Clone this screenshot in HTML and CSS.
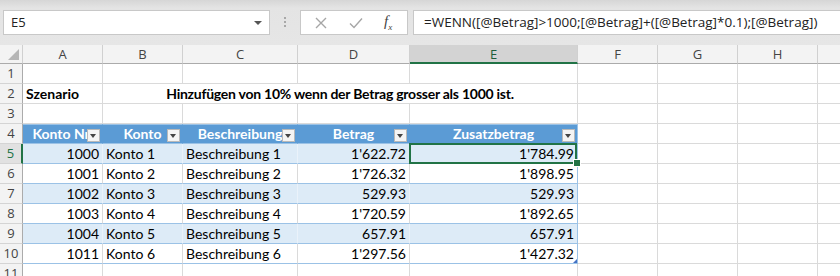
FILE: index.html
```html
<!doctype html>
<html>
    <head>
        <meta charset="UTF-8">
        <title>Zusatzbetrag</title>
        <link rel="stylesheet" href="styles.css">
    </head>
    <body>
        <div class="bar">
            <div class="namebox">E5<i class="caret"></i></div>
            <div class="grip"><b></b><b></b><b></b></div>
            <div class="fbtns">
                <svg class="ico" width="14" height="14" viewBox="0 0 14 14"><path d="M2 2 L12 12 M12 2 L2 12" stroke="#a6a6a6" stroke-width="1.4" fill="none"/></svg>
                <svg class="ico" width="16" height="14" viewBox="0 0 16 14"><path d="M2 7.5 L6 11.5 L14 2.5" stroke="#a6a6a6" stroke-width="1.4" fill="none"/></svg>
                <span class="fx"><i>f</i><sub>x</sub></span>
            </div>
            <div class="formula">=WENN([@Betrag]&gt;1000;[@Betrag]+([@Betrag]*0.1);[@Betrag])</div>
        </div>

        <div class="sheet">
            <!-- Spaltenköpfe -->
            <div class="ch corner"></div>
            <div class="ch">A</div>
            <div class="ch">B</div>
            <div class="ch">C</div>
            <div class="ch">D</div>
            <div class="ch sel">E</div>
            <div class="ch">F</div>
            <div class="ch">G</div>
            <div class="ch">H</div>
            <div class="ch"></div>

            <div class="rh">1</div>
            <div class="c"></div><div class="c"></div><div class="c"></div><div class="c"></div><div class="c"></div><div class="c"></div><div class="c"></div><div class="c"></div><div class="c"></div>

            <div class="rh">2</div>
            <div class="c bold">Szenario</div>
            <div class="c bold merged">Hinzufügen von 10% wenn der Betrag grosser als 1000 ist.</div>
            <div class="c"></div><div class="c"></div><div class="c"></div><div class="c"></div>

            <div class="rh">3</div>
            <div class="c"></div><div class="c"></div><div class="c"></div><div class="c"></div><div class="c"></div><div class="c"></div><div class="c"></div><div class="c"></div><div class="c"></div>

            <!-- Tabellenkopf -->
            <div class="rh">4</div>
            <div class="c th">Konto Nr.<span class="dd"></span></div>
            <div class="c th">Konto<span class="dd"></span></div>
            <div class="c th">Beschreibung<span class="dd"></span></div>
            <div class="c th">Betrag<span class="dd"></span></div>
            <div class="c th last">Zusatzbetrag<span class="dd"></span></div>
            <div class="c"></div><div class="c"></div><div class="c"></div><div class="c"></div>

            <div class="rh sel">5</div>
            <div class="c td band num">1000</div>
            <div class="c td band">Konto 1</div>
            <div class="c td band">Beschreibung 1</div>
            <div class="c td band num">1'622.72</div>
            <div class="c td band num last active">1'784.99</div>
            <div class="c"></div><div class="c"></div><div class="c"></div><div class="c"></div>

            <div class="rh">6</div>
            <div class="c td num">1001</div>
            <div class="c td">Konto 2</div>
            <div class="c td">Beschreibung 2</div>
            <div class="c td num">1'726.32</div>
            <div class="c td num last">1'898.95</div>
            <div class="c"></div><div class="c"></div><div class="c"></div><div class="c"></div>

            <div class="rh">7</div>
            <div class="c td band num">1002</div>
            <div class="c td band">Konto 3</div>
            <div class="c td band">Beschreibung 3</div>
            <div class="c td band num">529.93</div>
            <div class="c td band num last">529.93</div>
            <div class="c"></div><div class="c"></div><div class="c"></div><div class="c"></div>

            <div class="rh">8</div>
            <div class="c td num">1003</div>
            <div class="c td">Konto 4</div>
            <div class="c td">Beschreibung 4</div>
            <div class="c td num">1'720.59</div>
            <div class="c td num last">1'892.65</div>
            <div class="c"></div><div class="c"></div><div class="c"></div><div class="c"></div>

            <div class="rh">9</div>
            <div class="c td band num">1004</div>
            <div class="c td band">Konto 5</div>
            <div class="c td band">Beschreibung 5</div>
            <div class="c td band num">657.91</div>
            <div class="c td band num last">657.91</div>
            <div class="c"></div><div class="c"></div><div class="c"></div><div class="c"></div>

            <div class="rh">10</div>
            <div class="c td num">1011</div>
            <div class="c td">Konto 6</div>
            <div class="c td">Beschreibung 6</div>
            <div class="c td num">1'297.56</div>
            <div class="c td num last end">1'427.32</div>
            <div class="c"></div><div class="c"></div><div class="c"></div><div class="c"></div>

            <div class="rh">11</div>
            <div class="c"></div><div class="c"></div><div class="c"></div><div class="c"></div><div class="c"></div><div class="c"></div><div class="c"></div><div class="c"></div><div class="c"></div>
        </div>
    </body>
</html>
```

FILE: styles.css
```css
*{
    margin: 0;
    padding: 0;
    box-sizing: border-box;
}
body{
    width: 840px;
    height: 276px;
    overflow: hidden;
    background: #fff;
    font-family: Lato, "Liberation Sans", sans-serif;
}

/* Bearbeitungsleiste */
.bar{
    display: flex;
    align-items: flex-start;
    height: 45px;
    padding: 10px 0 0 3px;
    background: linear-gradient(#d6d6d6 0, #e4e4e4 8px, #e6e6e6 100%);
}
.namebox{
    position: relative;
    width: 267px;
    height: 25px;
    padding-left: 7px;
    background: #fff;
    border: 1px solid #c8c8c8;
    font: 13px "Open Sans", sans-serif;
    line-height: 23px;
    color: #222;
}
.caret{
    position: absolute;
    right: 7px;
    top: 10px;
    border-left: 4px solid transparent;
    border-right: 4px solid transparent;
    border-top: 4px solid #555;
}
.grip{
    display: flex;
    flex-direction: column;
    gap: 2px;
    width: 3px;
    margin: 7px 13px 0 14px;
}
.grip b{
    width: 2px;
    height: 2px;
    background: #a8a8a8;
}
.fbtns{
    display: flex;
    align-items: center;
    width: 108px;
    height: 25px;
    padding-left: 13px;
    background: #fff;
    border: 1px solid #c8c8c8;
}
.ico{
    margin-right: 20px;
}
.fx{
    font-family: "Liberation Serif", serif;
    font-size: 15px;
    color: #444;
}
.fx sub{
    font-size: 9px;
    font-style: italic;
}
.formula{
    flex: 1;
    height: 25px;
    margin-left: 5px;
    padding-left: 10px;
    background: #fff;
    border: 1px solid #c8c8c8;
    border-right: none;
    font: 13.5px "Open Sans", sans-serif;
    line-height: 23px;
    color: #222;
    white-space: nowrap;
    overflow: hidden;
}

/* Tabellenblatt */
.sheet{
    display: grid;
    grid-template-columns: 23px 80px 80px 115px 112px 168px 80px 80px 80px 80px;
    grid-template-rows: 19px repeat(11, 20px);
    font-size: 14px;
    color: #000;
}
.c{
    position: relative;
    padding: 0 3px;
    border-right: 1px solid #dadada;
    border-bottom: 1px solid #dadada;
    line-height: 20px;
    white-space: nowrap;
    overflow: hidden;
}
.ch{
    background: #f3f3f3;
    border-right: 1px solid #d0d0d0;
    border-bottom: 1px solid #ababab;
    text-align: center;
    font: 13px "Open Sans", sans-serif;
    line-height: 18px;
    color: #444;
}
.ch.corner{
    position: relative;
}
.ch.corner:after{                 /* graues Dreieck oben links */
    content: "";
    position: absolute;
    right: 3px;
    bottom: 3px;
    border-left: 11px solid transparent;
    border-bottom: 11px solid #b6b6b6;
}
.ch.sel{
    background: #d3d3d3;
    border-bottom: 2px solid #217346;
    color: #1e5e3a;
}
.rh{
    background: #f3f3f3;
    border-right: 1px solid #ababab;
    border-bottom: 1px solid #d4d4d4;
    text-align: center;
    font: 13px "Open Sans", sans-serif;
    line-height: 19px;
    color: #444;
    overflow: hidden;
}
.rh.sel{
    background: #e1e1e1;
    border-right: 2px solid #217346;
    color: #217346;
}
.bold{
    font-weight: bold;
}
.merged{
    grid-column: span 4;
    text-align: center;
    letter-spacing: -0.25px;
}
.num{
    text-align: right;
}

/* formatierte Tabelle */
.th{
    background: #5b9bd5;
    border-top: 1px solid #9bc2e6;
    border-right-color: #5b9bd5;
    border-bottom-color: #9bc2e6;
    color: #fff;
    font-weight: bold;
    text-align: center;
    line-height: 18px;
}
.dd{                              /* Filterknopf */
    position: absolute;
    right: 2px;
    top: 4px;
    width: 13px;
    height: 13px;
    background: #f4f4f4;
    border: 1px solid #b9b9b9;
}
.dd:after{
    content: "";
    position: absolute;
    left: 2px;
    top: 4px;
    border-left: 3.5px solid transparent;
    border-right: 3.5px solid transparent;
    border-top: 4px solid #444;
}
.td{
    border-bottom-color: #9bc2e6;
}
.band{
    background: #ddebf7;
    border-right-color: #eaf2fa;
}
.last{
    border-right-color: #9bc2e6;
}
.active{
    overflow: visible;
}
.active:after{                    /* markierte Zelle */
    content: "";
    position: absolute;
    left: -1px;
    top: -1px;
    right: 0;
    bottom: -1px;
    border: 2px solid #217346;
}
.active:before{                   /* Ausfuellkaestchen */
    content: "";
    position: absolute;
    right: -4px;
    bottom: -4px;
    width: 6px;
    height: 6px;
    background: #217346;
    border: 1px solid #fff;
    z-index: 1;
}
.end{
    overflow: visible;
}
.end:after{                       /* Groessenaenderung der Tabelle */
    content: "";
    position: absolute;
    right: 0;
    bottom: 0;
    border-left: 4px solid transparent;
    border-bottom: 4px solid #4472c4;
}
```
